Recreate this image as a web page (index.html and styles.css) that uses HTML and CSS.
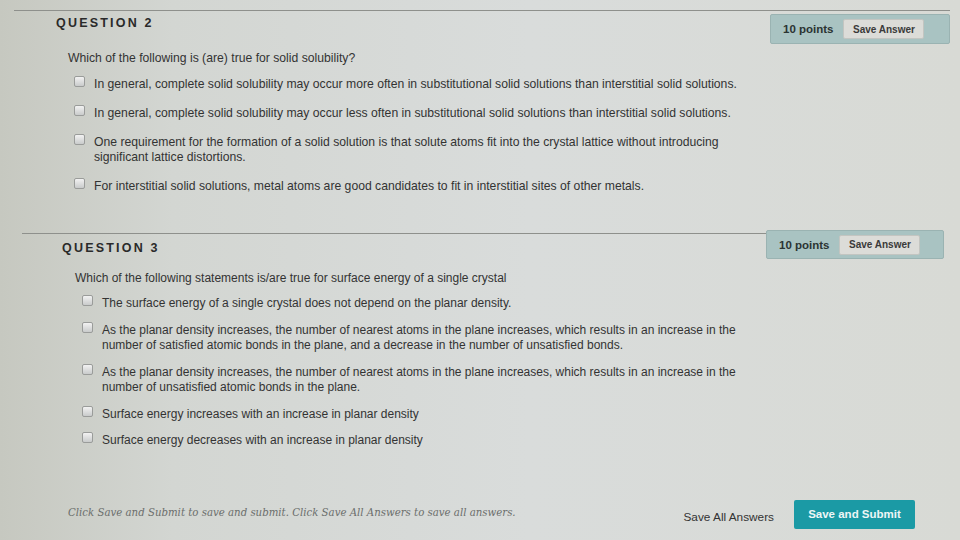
FILE: index.html
```html
<!DOCTYPE html>
<html>
<head>
<meta charset="utf-8">
<link rel="stylesheet" href="styles.css">
</head>
<body>
<div class="page">
  <section class="question q2">
    <div class="qhead">
      <h2 class="qtitle">QUESTION 2</h2>
      <div class="points"><span class="pts">10 points</span><button class="save">Save Answer</button></div>
    </div>
    <p class="qtext">Which of the following is (are) true for solid solubility?</p>
    <ul class="opts">
      <li><span class="cb"></span><span>In general, complete solid solubility may occur more often in substitutional solid solutions than interstitial solid solutions.</span></li>
      <li><span class="cb"></span><span>In general, complete solid solubility may occur less often in substitutional solid solutions than interstitial solid solutions.</span></li>
      <li><span class="cb"></span><span>One requirement for the formation of a solid solution is that solute atoms fit into the crystal lattice without introducing<br>significant lattice distortions.</span></li>
      <li><span class="cb"></span><span>For interstitial solid solutions, metal atoms are good candidates to fit in interstitial sites of other metals.</span></li>
    </ul>
  </section>
  <section class="question q3">
    <div class="qhead">
      <h2 class="qtitle">QUESTION 3</h2>
      <div class="points"><span class="pts">10 points</span><button class="save">Save Answer</button></div>
    </div>
    <p class="qtext">Which of the following statements is/are true for surface energy of a single crystal</p>
    <ul class="opts">
      <li><span class="cb"></span><span>The surface energy of a single crystal does not depend on the planar density.</span></li>
      <li><span class="cb"></span><span>As the planar density increases, the number of nearest atoms in the plane increases, which results in an increase in the<br>number of satisfied atomic bonds in the plane, and a decrease in the number of unsatisfied bonds.</span></li>
      <li><span class="cb"></span><span>As the planar density increases, the number of nearest atoms in the plane increases, which results in an increase in the<br>number of unsatisfied atomic bonds in the plane.</span></li>
      <li><span class="cb"></span><span>Surface energy increases with an increase in planar density</span></li>
      <li><span class="cb"></span><span>Surface energy decreases with an increase in planar density</span></li>
    </ul>
  </section>
  <footer class="foot">
    <p class="hint">Click Save and Submit to save and submit. Click Save All Answers to save all answers.</p>
    <div class="actions">
      <button class="saveall">Save All Answers</button>
      <button class="submit">Save and Submit</button>
    </div>
  </footer>
</div>
</body>
</html>
```
FILE: styles.css
```css
html, body {
  margin: 0;
  padding: 0;
}
body {
  width: 960px;
  height: 540px;
  overflow: hidden;
  background: linear-gradient(90deg, #c6c8c0 0%, #d3d6d2 18%, #d9dcdb 55%, #d8dad5 100%);
  font-family: "Liberation Sans", Arial, sans-serif;
  color: #333;
}
.page {
  padding: 10px 10px 0 14px;
}
.question {
  border-top: 1px solid #8e908c;
}
.qhead {
  display: flex;
  justify-content: space-between;
  align-items: flex-start;
}
.qtitle {
  margin: 5px 0 0 42px;
  font-size: 12.5px;
  font-weight: bold;
  letter-spacing: 2.2px;
  color: #2a2a2a;
}
.points {
  display: flex;
  align-items: center;
  gap: 10px;
  margin-top: 3px;
  height: 30px;
  width: 180px;
  padding-left: 12px;
  box-sizing: border-box;
  background: #a9c3c2;
  border: 1px solid #9ab3b2;
  border-radius: 2px;
}
.pts {
  font-size: 11.5px;
  font-weight: bold;
  color: #2b3433;
}
.save {
  font-family: "Liberation Sans", Arial, sans-serif;
  font-size: 10px;
  font-weight: bold;
  color: #3a3a3a;
  background: #dcdcd8;
  border: 1px solid #c3c5c1;
  border-radius: 2px;
  height: 20px;
  width: 81px;
  padding: 0;
}
.qtext {
  margin: 7px 0 0 54px;
  font-size: 12.2px;
  line-height: 15px;
}
.opts {
  list-style: none;
  margin: 11px 0 0 60px;
  padding: 0;
}
.opts li {
  display: flex;
  gap: 9px;
  font-size: 12.2px;
  line-height: 15px;
  margin-bottom: 14px;
}
.cb {
  flex: none;
  width: 11px;
  height: 11px;
  margin-top: -1px;
  border: 1px solid #9a9c9a;
  border-radius: 2px;
  background: linear-gradient(#f2f2f2, #c9cbcb);
  box-sizing: border-box;
}
.q2 .opts li:last-child {
  margin-bottom: 0;
}
.q3 {
  margin-top: 39px;
  margin-left: 8px;
  margin-right: 6px;
}
.q3 .qtitle {
  margin-top: 7px;
  margin-left: 40px;
}
.q3 .points {
  margin-top: -4px;
  height: 29px;
  width: 178px;
}
.q3 .qtext {
  margin-top: 12px;
  margin-left: 53px;
  font-size: 12px;
}
.q3 .opts {
  margin-left: 60px;
  margin-top: 10px;
}
.q3 .opts li {
  font-size: 12px;
  line-height: 15.5px;
  margin-bottom: 11px;
}
.q3 .opts li:last-child {
  margin-bottom: 0;
}
.foot {
  display: flex;
  justify-content: space-between;
  align-items: flex-end;
  margin-top: 51px;
  margin-left: 54px;
  margin-right: 35px;
}
.hint {
  margin: 0 0 9px 0;
  font-family: "DejaVu Serif", "Liberation Serif", serif;
  font-style: italic;
  font-size: 10.2px;
  line-height: 14px;
  color: #6b6e6c;
}
.actions {
  display: flex;
  align-items: center;
  gap: 20px;
}
.saveall {
  font-family: "Liberation Sans", Arial, sans-serif;
  font-size: 11.8px;
  color: #333;
  background: transparent;
  border: none;
  padding: 0;
  margin-top: 6px;
}
.submit {
  font-family: "Liberation Sans", Arial, sans-serif;
  font-size: 11.5px;
  font-weight: bold;
  color: #eef6f6;
  background: #1b9aa5;
  border: none;
  border-radius: 2px;
  width: 121px;
  height: 29px;
}
```
